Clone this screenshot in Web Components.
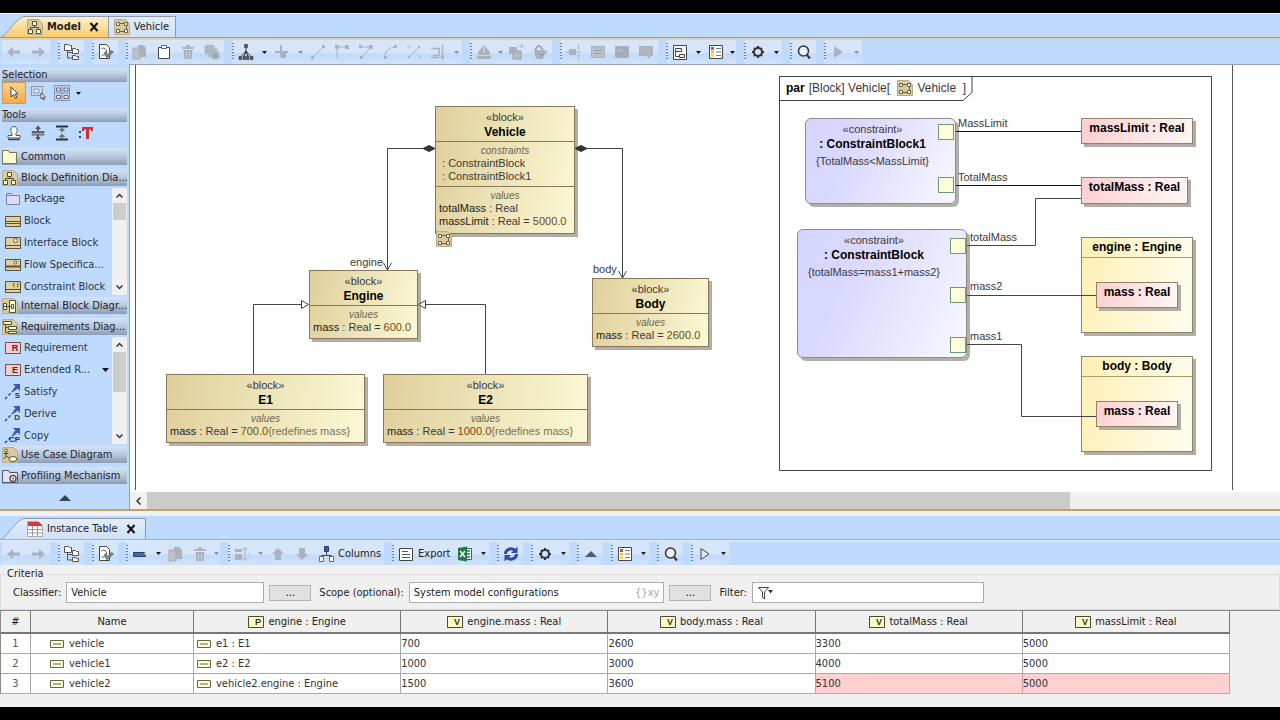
<!DOCTYPE html>
<html lang="en">
<head>
<meta charset="utf-8">
<title>Model - Vehicle</title>
<style>
  body {
    margin: 0;
    background: #000;
    color: #222;
    font: 11px/14px "DejaVu Sans Condensed", Roboto, sans-serif;
  }
</style>
</head>
<body>

<modeler-app></modeler-app>

<script>
(function () {

  // ===== ICONS (16 x 16) =====
  const NOTE = `<path d="M.5.5h11l4 4v11H.5z" fill="#d9cba0" stroke="#b7ab88"/>`;
  const GREY = "#aab3bd";

  const ICONS = {
    bdd: `${NOTE}<g fill="#fffde0" stroke="#55502e"><path d="M5.500 2.500h4v4h-4zM1.500 10.500h4v4h-4zM9.500 10.500h4v4h-4z"/><path d="M7.500 6.500v2M3.500 10.500v-2h8v2" fill="none"/></g>`,
    par: `${NOTE}<g fill="#fffde0" stroke="#6a6440"><path d="M2.500 3.500h3v3h-3zM10.500 3.500h3v3h-3zM2.500 10.500h3v3h-3zM10.500 10.500h3v3h-3z"/><path d="M5.500 4.500h5M5.500 12.500h5M12.500 6.500v4" fill="none"/></g>`,
    ibd: `${NOTE}<g fill="#fffde0" stroke="#55502e"><path d="M7.500 2.500h6v12h-6z"/><path d="M9.500 6.500h2v4h-2z"/><path d="M1.500 5.500h3v6h-3z"/><path d="M4.500 8.500h5M1.500 8.500h3" fill="none"/></g>`,
    reqd: `${NOTE}<g fill="#fffde0" stroke="#55502e"><path d="M1.500 2.500h8v3h-8zM6.500 7.500h8v3h-8zM6.500 12.500h8v2h-8z"/><path d="M3.500 5.500v8h3M3.500 8.500h3" fill="none"/></g>`,
    ucd: `${NOTE}<g fill="#fffde0" stroke="#55502e"><circle cx="4" cy="3.500" r="1.500"/><path d="M4 5v4M1.500 6.500h5M4 9l-2 3M4 9l5 3" fill="none"/><ellipse cx="11" cy="12" rx="4" ry="2.500"/></g>`,
    prof: `<path d="M.5 2.500h6l1 2h8v10H.5z" fill="#e3e3f8" stroke="#55556a"/><circle cx="11" cy="10.500" r="3" fill="#fff" stroke="#555" stroke-width="1.500"/><circle cx="11" cy="10.500" r="1" fill="#555"/>`,
    table: `<path d="M.5.5h11l4 4v11H.5z" fill="#fff" stroke="#aaa"/><path d="M1 1h10.500l3.500 3v1H1z" fill="#d23b3b"/><path d="M1 8.500h14M1 12h14M5.500 5v10M10.500 5v10" stroke="#999" fill="none"/>`,
    folder: `<path d="M.5 1.500h6l1 2h7v11H.5z" fill="#fffbd0" stroke="#77745a"/>`,
    package: `<path d="M1.500 2.500h5l1 2h7v9h-13z" fill="#dcdcf6" stroke="#7e80a0"/><path d="M1.500 4.500h6" stroke="#7e80a0"/>`,
    block: `<path d="M.5 3.500h15v10H.5z" fill="#e0d09e" stroke="#5c5233"/><path d="M1 8.500h14M1 10.500h14" stroke="#5c5233"/>`,
    iface: `<path d="M.5 2.500h15v11H.5z" fill="#e0d09e" stroke="#5c5233"/><circle cx="10.500" cy="5.500" r="2" fill="#fffbe0" stroke="#5c5233"/><path d="M1 10.500h14" stroke="#5c5233"/>`,
    flow: `<path d="M.5 2.500h15v11H.5z" fill="#e0d09e" stroke="#5c5233"/><circle cx="10.500" cy="5.500" r="1.500" fill="#fffbe0" stroke="#5c5233"/><path d="M1 9.500h14" stroke="#5c5233" stroke-width="2"/>`,
    cblock: `<path d="M.5 2.500h15v11H.5z" fill="#e0d09e" stroke="#5c5233"/><path d="M9.500 4q-1 0-1 2 0 2 1 2M12 4q1 0 1 2 0 2-1 2M1 10.500h14" fill="none" stroke="#5c5233"/>`,
    satisfy: arrowIcon("S"),
    derive: arrowIcon("D"),
    copyrel: arrowIcon("CP"),
    req: boxIcon("R", "#fcc9cf", "#7e4a4a"),
    ereq: boxIcon("E", "#fcc9cf", "#7e4a4a"),
    prop: boxIcon("P", "#fffcc4", "#4a4a30"),
    value: boxIcon("V", "#fffcc4", "#4a4a30"),
    inst: `<path d="M1.500 4.500h13v7h-13z" fill="#fffbd6" stroke="#66664a"/><path d="M4 8h8" stroke="#66664a"/>`,
    pointer: `<path d="M5 2v10l2.500-2.500 2 4 1.500-1-2-3.500h3z" fill="#fff" stroke="#444"/>`,
    lasso: `<path d="M1.500 1.500h11v9h-11z" fill="none" stroke="#556" stroke-dasharray="1 1"/><path d="M4 4h5v4H4z" fill="#e6e6e6" stroke="#999"/><path d="M11 8v6l1.500-1.500 1 2.500 1-.5-1-2.500h2z" fill="#fff" stroke="#333" stroke-width=".8"/>`,
    grid: `<path d="M.5.5h15v15H.5zM.5 8h15M8 .5v15" fill="none" stroke="#556" stroke-dasharray="1 1"/><path d="M2.500 3h4v3h-4zM10 3h4v3h-4zM2.500 10.500h4v3h-4zM10 10.500h4v3h-4z" fill="#eef" stroke="#667"/>`,
    stamp: `<path d="M6 8.500C4 6 4.500 1.500 8 1.500S12 6 10 8.500v2h4v2.500H2v-2.500h4z" fill="#fff" stroke="#555"/><path d="M2 14.500h12" stroke="#444" stroke-width="1.500"/>`,
    spread: `<path d="M8 .5L11 4H9v2H7V4H5zM8 15.500L5 12h2v-2h2v2h2z" fill="#555"/><path d="M2 6.500h12v1H2zM2 9h12v1H2z" fill="#eee" stroke="#444" stroke-width=".8"/>`,
    squeeze: `<path d="M2 1.500h12M2 14.500h12" stroke="#333" stroke-width="2"/><path d="M8 7.500L4.500 4H7V2h2v2h2.500zM8 8.500L11.500 12H9v2H7v-2H4.500z" fill="#777"/>`,
    textT: `<path d="M4 2h11v4h-2V4.500h-2V14H8V4.500H6V6H4z" fill="#d22e3a"/><path d="M1 6h2v2H1zM1 11h2v2H1z" fill="#444"/>`,
    back: `<path d="M1 8l6-5v3.500h7v3H7V13z" fill="${GREY}"/>`,
    forward: `<path d="M15 8L9 3v3.500H2v3h7V13z" fill="${GREY}"/>`,
    tree: `<g fill="#fff" stroke="#555"><path d="M.5.500h4l1 1h2v5h-7zM8.500 4.500h3l1 1h2v4h-6zM8.500 11.500h3l1 1h2v3h-6z"/><path d="M3.500 6.500v7.500h5M3.500 8.500h5" fill="none"/></g>`,
    check: `<path d="M1.500.5h7l3 3v11h-10z" fill="#fff" stroke="#444"/><path d="M3.500 5q2-2 4 0t1 4M3.500 11h3" fill="none" stroke="#666"/><path d="M6 9l3 5 6.500-6-2-1.500-4 4-1.500-3z" fill="#7c8792" stroke="#4c5660" stroke-width=".6"/>`,
    copy: `<path d="M6 1h5l3 3v9H6z" fill="${GREY}"/><path d="M1 4h5l2 2v9H1z" fill="#bac1c8" stroke="#a3abb5"/>`,
    paste: `<path d="M2.500 3.500h11v11h-11z" fill="#fff" stroke="#444"/><path d="M5.500 1.500h5v3h-5z" fill="#fff" stroke="#666"/>`,
    trash: `<path d="M2 3h12v2H2zM6 1h4v2H6zM3.500 6h9l-1 9h-7z" fill="${GREY}"/><path d="M6.500 7.500v6M9.500 7.500v6" stroke="#c8d2dc"/>`,
    copydel: `<path d="M1 1h9v9H1zM4 4h9v9H4z" fill="${GREY}" stroke="#bcc6d0"/><path d="M8 8h7v7H8z" fill="#9fa7b0" stroke="#bcc6d0"/>`,
    hier: `<path d="M8 3v4M8 7L3 13M8 7l-2 6M8 7l2 6M8 7l5 6" stroke="#333" fill="none"/><path d="M6.500.5h3v3h-3zM1 12.500h2.500v3H1zM5 12.500h2.500v3H5zM8.500 12.500H11v3H8.500zM12.500 12.500H15v3h-2.500z" fill="#556" stroke="#333" stroke-width=".6"/>`,
    cross: `<path d="M7 1v12M1 8h13" stroke="${GREY}" stroke-width="2"/><path d="M7 7h5v7H7z" fill="${GREY}"/>`,
    line1: `<path d="M3 13L13 3" stroke="${GREY}"/><path d="M1 12h3v3H1zM12 1h3v3h-3z" fill="${GREY}"/>`,
    line2: `<path d="M3 14V3h10" stroke="${GREY}" fill="none"/><path d="M1 1h4v4H1zM11 1h4v4h-4z" fill="${GREY}"/>`,
    line3: `<path d="M3 3h10L4 13" stroke="${GREY}" fill="none"/><path d="M1 1h3v3H1zM11 1h4v4h-4zM2 12h3v3H2z" fill="${GREY}"/>`,
    line4: `<path d="M3 13Q3 4 13 3" stroke="${GREY}" fill="none"/><path d="M2 12h3v3H2zM12 1h3v3h-3z" fill="${GREY}"/>`,
    line5: `<path d="M3 13L13 3M1 3h3M12 13h3" stroke="${GREY}" fill="none"/><path d="M2 12h2v2H2zM12 2h2v2h-2z" fill="${GREY}"/>`,
    line6: `<path d="M1 4.500h8v7H3M1 13.500h8M12.500 1v11" stroke="${GREY}" fill="none" stroke-width="1.500"/><path d="M11 12h3v3h-3z" fill="${GREY}"/>`,
    bucket: `<path d="M2 8l6-7 6 7v3H2zM1 12h14v3H1z" fill="${GREY}"/><path d="M8 2v7" stroke="#d3dfec"/>`,
    layers: `<path d="M1 3h8v7H1z" fill="${GREY}"/><path d="M5 7h8v8H5z" fill="#b3bbc4" stroke="#98a1ab"/><path d="M11 2h5M13.500 0v4" stroke="${GREY}"/>`,
    repair: `<path d="M2 6h11l-2 9H4z" fill="${GREY}"/><path d="M3 6q4-8 8 0M7 9l3 3 5-5" stroke="#98a1ab" fill="none" stroke-width="1.500"/>`,
    route: `<path d="M0 8h15M12.500 1v5M12.500 10v5" stroke="${GREY}"/><path d="M3 5h7v6H3z" fill="${GREY}"/>`,
    panel1: `<path d="M1.500 2.500h13v11h-13z" fill="#b9c0c7" stroke="${GREY}"/><path d="M4 6.500h8M4 9.500h8" stroke="#98a1ab"/>`,
    panel2: `<path d="M1.500 2.500h13v11h-13z" fill="#a7aeb6" stroke="${GREY}"/><path d="M3 8l3-3 3 3" stroke="#c9d2da" fill="none"/>`,
    panel3: `<path d="M1.500 2.500h13v9h-3v3l-3-3h-7z" fill="#aeb5bd" stroke="${GREY}"/>`,
    align: `<path d="M1.500 1.500h13v14h-13z" fill="#fff" stroke="#444"/><path d="M3.500 4.500h6v3h-6zM7.500 10.500h5v3h-5z" fill="#eef" stroke="#444"/><path d="M3.500 7.500v5h4" fill="none" stroke="#444"/>`,
    legend: `<path d="M1.500 1.500h13v13h-13z" fill="#fff" stroke="#445"/><path d="M3 3h3v3H3z" fill="#d9483b"/><path d="M3 7h3v2H3z" fill="#e8b53c"/><path d="M3 10h3v3H3z" fill="#f0dc50"/><path d="M8 4.500h5M8 8h5M8 11.500h5" stroke="#777"/>`,
    gear: `<circle cx="8" cy="8" r="4" fill="none" stroke="#333" stroke-width="2"/><path d="M8 2v2M8 12v2M2 8h2M12 8h2M4 4l1 1M11 11l1 1M12 4l-1 1M5 11l-1 1" stroke="#333" stroke-width="2"/>`,
    search: `<circle cx="7.500" cy="7" r="5" fill="#eaf3fd" stroke="#333" stroke-width="1.500"/><path d="M11 11l3 3.500" stroke="#333" stroke-width="2"/>`,
    playoff: `<path d="M4 2l9 6-9 6z" fill="${GREY}"/>`,
    play: `<path d="M4 2.500l8 5.500-8 5.500z" fill="#dfeafa" stroke="#445"/>`,
    add: `<path d="M1.500 6.500h12v4h-12z" fill="#4a68b4" stroke="#26406f"/><path d="M13 4l1 1.500 2-.5-1 2 1 1.500-2-.5-1 1.500-.5-2z" fill="#f5e07a"/>`,
    move: `<path d="M1 3h7v3H1zM1 8h7v6H1z" fill="${GREY}"/><path d="M11 14V2M9 4l2-2.500L13 4M9 12l2 2.500 2-2.500M14 8h2" stroke="${GREY}" fill="none"/>`,
    up: `<path d="M8 2l6 6h-3v6H5V8H2z" fill="${GREY}"/>`,
    down: `<path d="M8 14l6-6h-3V2H5v6H2z" fill="${GREY}"/>`,
    columns: `<path d="M6.500.5h4v5h-4z" fill="#3c5aa8" stroke="#24386e"/><path d="M8.500 5.500v4M3.500 11V9.500h10V11" stroke="#444" fill="none"/><path d="M1.500 10.500h4v5h-4zM11.500 10.500h4v5h-4z" fill="#fff" stroke="#667"/>`,
    export: `<path d="M1.500 2.500h13v12h-13z" fill="#fff" stroke="#444"/><path d="M4 5.500h6M4 8.500h8M4 11.500h8" stroke="#555"/>`,
    excel: `<path d="M8 2.500h6.500v11H8z" fill="#fff" stroke="#1f7a45"/><path d="M10 5h3M10 8h3M10 11h3" stroke="#1f7a45" stroke-width="1.500"/><path d="M1 2l9-1.500v15L1 14z" fill="#1f7a45"/><path d="M3 5l5 6M8 5l-5 6" stroke="#fff" stroke-width="1.500"/>`,
    refresh: `<path d="M2.500 8a5.500 5 0 0 1 9-4M13.500 8a5.500 5 0 0 1-9 4" fill="none" stroke="#3446a8" stroke-width="3"/><path d="M14.500.5V7H8zM1.500 15.500V9H8z" fill="#3446a8"/>`,
    collapse: `<path d="M2 11l6-6 6 6z" fill="#555b66"/>`,
    filter: `<path d="M1.500 2.500h10l-4 4.500v7l-2-1.500V7z" fill="#fff" stroke="#444"/><path d="M11 5h5l-2.500 3.500z" fill="#333"/>`
  };

  function arrowIcon(letter) {
    return `<path d="M0 15L9 6" stroke="#32508e" stroke-width="1.500" stroke-dasharray="3 2"/><path d="M8 0h7v7l-2.500-2.500L10 7 8 5l2.500-2.500z" fill="#3b5cae"/><text x="15" y="14" text-anchor="end" font-family="Liberation Sans" font-weight="bold" font-size="8" fill="#333">${letter}</text>`;
  }

  function boxIcon(letter, fill, stroke) {
    return `<path d="M.5 2.500h15v11H.5z" fill="${fill}" stroke="${stroke}"/><text x="10" y="11" text-anchor="middle" font-family="Liberation Sans" font-weight="bold" font-size="9" fill="#333">${letter}</text>`;
  }

  // Small base: every element renders its html() into an open shadow root
  class Base extends HTMLElement {
    constructor() {
      super();
      this._root = this.attachShadow({ mode: "open" });
    }
    connectedCallback() {
      this._root.innerHTML = this.html();
    }
    attr(name, def) {
      return this.getAttribute(name) || def || "";
    }
  }

  class UiIcon extends Base {
    html() {
      return `
        <style>
          :host { display: inline-block; width: 16px; height: 16px; flex: none; }
          svg { display: block; width: 100%; height: 100%; overflow: visible; }
        </style>
        <svg viewBox="0 0 16 16" aria-hidden="true">${ICONS[this.attr("name")] || ""}</svg>
      `;
    }
  }

  // ===== TABS =====
  class TabBar extends Base {
    html() {
      return `
        <style>
          :host {
            display: flex;
            align-items: flex-end;
            height: 23px;
            background: #bfdaff;
            border-top: 1px solid #e8f1fd;
            border-bottom: 1px solid var(--edge, #a89a80);
          }
        </style>
        <slot></slot>
      `;
    }
  }

  class TabItem extends Base {
    html() {
      const slope = this.hasAttribute("slope");
      const close = this.hasAttribute("closable");
      return `
        <style>
          :host { display: flex; height: 21px; --top: #e2edfc; --low: #cfe1f9; }
          :host([active]) { --top: #fdf0cf; --low: #f9cb6a; font-weight: bold; }
          svg { width: 24px; height: 21px; flex: none; }
          .body {
            display: flex;
            align-items: center;
            background: linear-gradient(var(--top), var(--low));
            border-top: 1px solid #8e9aac;
            border-right: 1px solid #8e9aac;
            padding-right: 6px;
          }
          button {
            display: flex;
            align-items: center;
            gap: 4px;
            border: 0;
            padding: 0 0 0 5px;
            background: none;
            font: inherit;
            color: #222;
          }
          .slope { padding-right: 9px; }
          .slope button { padding-left: 3px; }
          .slope .close { padding-left: 8px; }
          .close svg { width: 10px; height: 10px; }
        </style>
        ${slope ? `<svg viewBox="0 0 24 21">
          <defs><linearGradient id="g" x2="0" y2="1">
            <stop offset="0" stop-color="var(--top)"/><stop offset="1" stop-color="var(--low)"/>
          </linearGradient></defs>
          <path d="M1 21C6 20 17 1 24 0V21z" fill="url(#g)"/>
          <path d="M1 21C6 20 17 1 24 .5" fill="none" stroke="#8e9aac"/>
        </svg>` : ""}
        <div class="body ${slope ? "slope" : ""}">
          <button type="button"><ui-icon name="${this.attr("icon")}"></ui-icon><slot></slot></button>
          ${close ? `<button type="button" class="close" aria-label="Close"><svg viewBox="0 0 10 10"><path d="M1.500 1l7 8M8.500 1l-7 8" stroke="#111" stroke-width="2"/></svg></button>` : ""}
        </div>
      `;
    }
  }

  // ===== TOOLBAR =====
  class ToolBar extends Base {
    html() {
      return `
        <style>
          :host {
            display: flex;
            height: 24px;
            padding-left: 2px;
            gap: 8px;
            background: #bfdaff;
            border-top: 2px solid var(--rule, #e4d3a8);
          }
        </style>
        <slot></slot>
      `;
    }
  }

  class ToolGroup extends Base {
    html() {
      return `
        <style>
          :host {
            display: flex;
            align-items: stretch;
            background: linear-gradient(#d6e5fa 0 50%, #c3daf8 60%, #cfe2fb);
          }
          .grip {
            width: 2px;
            margin: 3px 0;
            background: repeating-linear-gradient(#5f7fb0 0 1px, transparent 1px 3px);
          }
        </style>
        ${this.hasAttribute("bare") ? "" : `<div class="grip"></div>`}
        <slot></slot>
      `;
    }
  }

  class ToolButton extends Base {
    html() {
      const label = this.attr("label");
      const color = this.hasAttribute("dim") ? "#8592a3" : "#111";
      return `
        <style>
          :host { display: flex; }
          button {
            display: flex;
            align-items: center;
            justify-content: center;
            min-width: 24px;
            padding: 0;
            border: 0;
            background: none;
            color: #222;
            font: inherit;
          }
          button.text { gap: 4px; padding: 0 3px 0 4px; }
          button.drop { min-width: 12px; }
          :host([tight]) button.drop { min-width: 8px; }
          .drop svg { width: 5px; height: 3px; }
        </style>
        <button type="button" class="${label ? "text" : ""}" aria-label="${label || this.attr("icon")}"><ui-icon name="${this.attr("icon")}"></ui-icon>${label}</button>
        ${this.hasAttribute("drop") ? `<button type="button" class="drop" aria-label="More"><svg viewBox="0 0 5 3"><path d="M0 0h5L2.500 3z" fill="${color}"/></svg></button>` : ""}
      `;
    }
  }

  // Item syntax: icon, icon=Label, then ">" drop-down, "~" tight drop-down, "!" dimmed
  function group(items, bare) {
    return `<tool-group ${bare ? "bare" : ""}>` + items.split(" ").filter(Boolean).map(item => {
      const m = item.match(/^(\w+)(?:=(\w+))?([>~!]*)$/);
      return `<tool-button icon="${m[1]}" ${m[2] ? `label="${m[2]}"` : ""}
        ${/[>~]/.test(m[3]) ? "drop" : ""} ${m[3].includes("~") ? "tight" : ""} ${m[3].includes("!") ? "dim" : ""}></tool-button>`;
    }).join("") + `</tool-group>`;
  }

  // ===== SIDE PALETTE =====
  class PaletteHead extends Base {
    html() {
      const icon = this.attr("icon");
      return `
        <style>
          :host { display: block; }
          button {
            display: flex;
            align-items: center;
            gap: 3px;
            width: 100%;
            height: 17px;
            padding: 0;
            border: 0;
            background: linear-gradient(#d5e4f8, #b8c8df 50%, #8e9cb3);
            color: #1c2430;
            font: inherit;
            white-space: nowrap;
          }
          :host([plain]) button { height: 14px; }
        </style>
        <button type="button">${icon ? `<ui-icon name="${icon}"></ui-icon>` : ""}<slot></slot></button>
      `;
    }
  }

  class PaletteItem extends Base {
    html() {
      return `
        <style>
          :host { display: block; }
          button {
            display: flex;
            align-items: center;
            gap: 3px;
            width: 100%;
            height: 22px;
            padding: 0 3px;
            border: 0;
            background: none;
            color: #2c3440;
            font: inherit;
            white-space: nowrap;
          }
          .drop { width: 7px; height: 4px; margin-left: auto; }
        </style>
        <button type="button">
          <ui-icon name="${this.attr("icon")}"></ui-icon><slot></slot>
          ${this.hasAttribute("drop") ? `<svg class="drop" viewBox="0 0 7 4"><path d="M0 0h7L3.500 4z" fill="#111"/></svg>` : ""}
        </button>
      `;
    }
  }

  class PaletteList extends Base {
    html() {
      return `
        <style>
          :host { display: flex; height: 107px; overflow: hidden; }
          .items { flex: 1; min-width: 0; }
          .bar {
            display: flex;
            flex-direction: column;
            align-items: center;
            width: 15px;
            background: #f0f0f0;
          }
          .thumb { width: 13px; height: ${this.attr("thumb")}px; background: #cdcdcd; }
          svg { width: 7px; height: 5px; padding: 5px 0; }
          svg:last-child { margin-top: auto; }
        </style>
        <div class="items"><slot></slot></div>
        <div class="bar">
          <svg viewBox="0 0 7 5"><path d="M.5 4.500l3-3 3 3" fill="none" stroke="#333" stroke-width="1.500"/></svg>
          <div class="thumb"></div>
          <svg viewBox="0 0 7 5"><path d="M.5.5l3 3 3-3" fill="none" stroke="#333" stroke-width="1.500"/></svg>
        </div>
      `;
    }
  }

  class SidePalette extends Base {
    html() {
      return `
        <style>
          :host {
            display: flex;
            flex-direction: column;
            width: 125px;
            padding: 4px 2px 0;
            background: #bfdaff;
          }
          .row { display: flex; height: 26px; align-items: flex-start; }
          .stack { display: flex; flex-direction: column; gap: 4px; }
          .tool {
            display: flex;
            align-items: center;
            justify-content: center;
            box-sizing: border-box;
            width: 24px;
            height: 22px;
            padding: 0;
            border: 0;
            background: none;
          }
          .tool.on { background: linear-gradient(#fbd08c, #f7ad42); border: 1px solid #c99a54; }
          .gap { margin-top: 2px; }
          .caret { width: 5px; height: 3px; margin: 10px 0 0 2px; }
          .more { align-self: center; border: 0; padding: 10px 10px 5px; background: none; }
          .more svg { display: block; width: 12px; height: 7px; }
        </style>
        <palette-head plain>Selection</palette-head>
        <div class="row">
          <button type="button" class="tool on" aria-label="Select"><ui-icon name="pointer"></ui-icon></button>
          <button type="button" class="tool" aria-label="Lasso"><ui-icon name="lasso"></ui-icon></button>
          <button type="button" class="tool" aria-label="Group select"><ui-icon name="grid"></ui-icon></button>
          <svg class="caret" viewBox="0 0 5 3"><path d="M0 0h5L2.500 3z" fill="#111"/></svg>
        </div>
        <palette-head plain>Tools</palette-head>
        <div class="row">
          <button type="button" class="tool" aria-label="Stamp"><ui-icon name="stamp"></ui-icon></button>
          <button type="button" class="tool" aria-label="Spread"><ui-icon name="spread"></ui-icon></button>
          <button type="button" class="tool" aria-label="Squeeze"><ui-icon name="squeeze"></ui-icon></button>
          <button type="button" class="tool" aria-label="Text"><ui-icon name="textT"></ui-icon></button>
        </div>
        <div class="stack">
          <palette-head icon="folder">Common</palette-head>
          <palette-head icon="bdd">Block Definition Dia...</palette-head>
        </div>
        <palette-list class="gap" thumb="17">
          <palette-item icon="package">Package</palette-item>
          <palette-item icon="block">Block</palette-item>
          <palette-item icon="iface">Interface Block</palette-item>
          <palette-item icon="flow">Flow Specifica...</palette-item>
          <palette-item icon="cblock">Constraint Block</palette-item>
        </palette-list>
        <div class="stack gap">
          <palette-head icon="ibd">Internal Block Diagr...</palette-head>
          <palette-head icon="reqd">Requirements Diag...</palette-head>
        </div>
        <palette-list class="gap" thumb="40">
          <palette-item icon="req">Requirement</palette-item>
          <palette-item icon="ereq" drop>Extended R...</palette-item>
          <palette-item icon="satisfy">Satisfy</palette-item>
          <palette-item icon="derive">Derive</palette-item>
          <palette-item icon="copyrel">Copy</palette-item>
        </palette-list>
        <div class="stack gap">
          <palette-head icon="ucd">Use Case Diagram</palette-head>
          <palette-head icon="prof">Profiling Mechanism</palette-head>
        </div>
        <button type="button" class="more" aria-label="Scroll up"><svg viewBox="0 0 12 7"><path d="M0 7l6-6 6 6z" fill="#3a4152"/></svg></button>
      `;
    }
  }

  // ===== DIAGRAM NODES =====
  // Anything on the sheet is placed by x / y and sized by w / h
  class SheetNode extends Base {
    connectedCallback() {
      if (this.hasAttribute("x")) {
        this.style.position = "absolute";
        this.style.left = this.attr("x") + "px";
        this.style.top = this.attr("y") + "px";
      }
      if (this.hasAttribute("w")) this.style.width = this.attr("w") + "px";
      if (this.hasAttribute("h")) this.style.height = this.attr("h") + "px";
      super.connectedCallback();
    }
  }

  class BlockNode extends SheetNode {
    html() {
      return `
        <style>
          :host {
            display: block;
            box-sizing: border-box;
            border: 1px solid #8a765a;
            background: linear-gradient(100deg, #e0cf9b, #fbf9d6);
            box-shadow: 3px 3px 0 #b3ada6;
            text-align: center;
          }
          .head { padding: 3px 0 1px; }
          .name { font-size: 12px; line-height: 16px; font-weight: bold; color: #000; }
        </style>
        <div class="head">
          <div>«block»</div>
          <div class="name">${this.attr("name")}</div>
        </div>
        <slot></slot>
      `;
    }
  }

  class BlockPart extends Base {
    html() {
      return `
        <style>
          :host {
            display: block;
            padding: 3px 3px 3px;
            border-top: 1px solid #8a765a;
            line-height: 13px;
            text-align: left;
            white-space: nowrap;
          }
          .kind { font-size: 10px; line-height: 12px; font-style: italic; text-align: center; color: #6b6553; }
        </style>
        <div class="kind">${this.attr("kind")}</div>
        <slot></slot>
      `;
    }
  }

  class ConstraintNode extends SheetNode {
    html() {
      return `
        <style>
          :host {
            display: block;
            box-sizing: border-box;
            padding: 3px 16px 0 0;
            border: 1px solid #8d8d86;
            border-radius: 6px;
            background: linear-gradient(115deg, #d6d5ff, #d9d8ff 30%, #f8f8ff);
            box-shadow: 3px 3px 0 #b1b1ac;
            text-align: center;
            white-space: nowrap;
          }
          .name { font-size: 12px; line-height: 16px; font-weight: bold; color: #000; }
          .expr { margin-top: 2px; }
        </style>
        <div>«constraint»</div>
        <div class="name">: ${this.attr("name")}</div>
        <div class="expr"><slot></slot></div>
      `;
    }
  }

  class PortNode extends SheetNode {
    html() {
      return `
        <style>
          :host {
            display: block;
            box-sizing: border-box;
            width: 16px;
            height: 16px;
            border: 1px solid #6f9a72;
            background: #fdffd9;
          }
        </style>
      `;
    }
  }

  class PropertyNode extends SheetNode {
    html() {
      return `
        <style>
          :host {
            display: block;
            box-sizing: border-box;
            border: 1px solid #8f8468;
            background: linear-gradient(100deg, #ffcfd0, #fff6f6);
            box-shadow: 3px 3px 0 #b3ada6;
            text-align: center;
            font-size: 12px;
            font-weight: bold;
            color: #000;
          }
          .name { line-height: 19px; white-space: nowrap; }
          :host([outer]) { background: linear-gradient(100deg, #fff0b4, #fffdf0); }
          :host([outer]) .name { border-bottom: 1px solid #a89c70; }
          :host([outer]) .in { display: flex; justify-content: center; padding-top: 24px; }
        </style>
        <div class="name">${this.attr("name")}</div>
        <div class="in"><slot></slot></div>
      `;
    }
  }

  class SheetLabel extends SheetNode {
    html() {
      return `<style>:host { display: flex; align-items: center; white-space: nowrap; }</style><slot></slot>`;
    }
  }

  class DiagramSheet extends Base {
    html() {
      return `
        <style>
          :host {
            display: block;
            position: relative;
            box-sizing: border-box;
            width: 1098px;
            height: 425px;
            border: solid #555;
            border-width: 0 1px;
            font-family: "Liberation Sans", Arial, sans-serif;
            color: #3a3a3a;
          }
          svg { position: absolute; left: 0; top: 0; width: 1096px; height: 425px; pointer-events: none; }
          .v { color: #6e4c12; }
          .r { color: #777257; }
          .m { color: #1c1c1c; }
          b { font-size: 12px; color: #000; }
          .frame { gap: 4px; font-size: 12px; }
        </style>

        <block-node name="Vehicle" x="299" y="41" w="140" h="128">
          <block-part kind="constraints">
            <div>&nbsp;: ConstraintBlock</div>
            <div>&nbsp;: ConstraintBlock1</div>
          </block-part>
          <block-part kind="values">
            <div><span class="m">totalMass</span> : Real</div>
            <div><span class="m">massLimit</span> : Real = <span class="v">5000.0</span></div>
          </block-part>
        </block-node>
        <ui-icon name="par" style="position: absolute; left: 300px; top: 166px"></ui-icon>

        <block-node name="Engine" x="173" y="205" w="109" h="69">
          <block-part kind="values"><span class="m">mass</span> : Real = <span class="v">600.0</span></block-part>
        </block-node>
        <block-node name="Body" x="456" y="213" w="117" h="69">
          <block-part kind="values"><span class="m">mass</span> : Real = <span class="v">2600.0</span></block-part>
        </block-node>
        <block-node name="E1" x="30" y="309" w="199" h="69">
          <block-part kind="values"><span class="m">mass</span> : Real = <span class="v">700.0</span><span class="r">{redefines mass}</span></block-part>
        </block-node>
        <block-node name="E2" x="247" y="309" w="205" h="69">
          <block-part kind="values"><span class="m">mass</span> : Real = <span class="v">1000.0</span><span class="r">{redefines mass}</span></block-part>
        </block-node>

        <constraint-node name="ConstraintBlock1" x="669" y="53" w="151" h="86">{TotalMass&lt;MassLimit}</constraint-node>
        <constraint-node name="ConstraintBlock" x="661" y="164" w="170" h="129">{totalMass=mass1+mass2}</constraint-node>
        <port-node x="802" y="59"></port-node>
        <port-node x="802" y="112"></port-node>
        <port-node x="814" y="173"></port-node>
        <port-node x="814" y="222"></port-node>
        <port-node x="814" y="272"></port-node>

        <property-node name="massLimit : Real" x="945" y="53" w="112" h="26"></property-node>
        <property-node name="totalMass : Real" x="945" y="112" w="107" h="27"></property-node>
        <property-node outer name="engine : Engine" x="945" y="172" w="112" h="96">
          <property-node name="mass : Real" w="82" h="26"></property-node>
        </property-node>
        <property-node outer name="body : Body" x="945" y="291" w="112" h="96">
          <property-node name="mass : Real" w="82" h="26"></property-node>
        </property-node>

        <svg viewBox="0 0 1096 425">
          <g fill="none" stroke="#444">
            <path d="M288 83.500H251.500V204M247.500 198l4 7 4-7"/>
            <path d="M450 83.500H486.500V212M482.500 206l4 7 4-7"/>
            <path d="M117.500 309V239.500H165M349.500 309V239.500H290"/>
            <path d="M643.500 11.500H1075.500V405.500H643.500zM643.500 35.500H827l9-8V11.500"/>
            <path d="M820 66.500H945M820 120.500H945" stroke="#111"/>
            <path d="M831 180.500H899.500V133.500H945M831 230.500H960M831 279.500H885.500V351.500H960"/>
          </g>
          <path d="M287 83.500l6-3 6 3-6 3zM439 83.500l6-3 6 3-6 3z" fill="#333" stroke="#333"/>
          <path d="M165.500 235.500v8l7-4zM289.500 235.500v8l-7-4z" fill="#fff" stroke="#444"/>
        </svg>

        <sheet-label x="214" y="190">engine</sheet-label>
        <sheet-label x="457" y="197">body</sheet-label>
        <sheet-label x="822" y="51">MassLimit</sheet-label>
        <sheet-label x="822" y="105">TotalMass</sheet-label>
        <sheet-label x="834" y="165">totalMass</sheet-label>
        <sheet-label x="834" y="214">mass2</sheet-label>
        <sheet-label x="834" y="264">mass1</sheet-label>
        <sheet-label class="frame" x="650" y="15">
          <b>par</b> <span>[Block] Vehicle[&nbsp;</span> <ui-icon name="par"></ui-icon> <span>Vehicle&nbsp; ]</span>
        </sheet-label>
      `;
    }
  }

  class DiagramPane extends Base {
    html() {
      return `
        <style>
          :host {
            display: flex;
            flex-direction: column;
            min-width: 0;
            background: #fff;
            border-left: 1px solid #98a0ab;
            border-top: 1px solid #98a0ab;
          }
          .view { flex: 1; padding-left: 5px; overflow: hidden; }
          .scroll { display: flex; height: 17px; align-items: center; background: #f0f0f0; }
          svg { width: 5px; height: 8px; padding: 0 6px; }
          .thumb { flex: 923; height: 100%; background: #cbcbcb; }
          .track { flex: 210; }
        </style>
        <div class="view"><diagram-sheet></diagram-sheet></div>
        <div class="scroll">
          <svg viewBox="0 0 5 8"><path d="M4.500.5L1 4l3.500 3.500" fill="none" stroke="#333" stroke-width="1.500"/></svg>
          <div class="thumb"></div>
          <div class="track"></div>
        </div>
      `;
    }
  }

  // ===== CRITERIA FORM =====
  class CriteriaForm extends Base {
    html() {
      return `
        <style>
          :host { display: block; }
          fieldset {
            display: flex;
            align-items: center;
            margin: 0;
            padding: 1px 0 6px 12px;
            border: 1px solid #dcdcdc;
            min-width: 0;
          }
          legend { margin-left: -8px; padding: 0 2px; }
          label { margin-right: 5px; white-space: nowrap; }
          .box {
            display: flex;
            align-items: center;
            box-sizing: border-box;
            height: 21px;
            min-width: 0;
            padding: 0 4px;
            border: 1px solid #acb0b6;
            background: #fff;
            color: #aaa;
          }
          input {
            flex: 1;
            min-width: 0;
            padding: 0;
            border: 0;
            outline: 0;
            background: none;
            font: inherit;
            color: #222;
          }
          .a { flex: 196 1 0; }
          .b { flex: 256 1 0; }
          .c { flex: 231 1 0; }
          .rest { flex: 308 1 0; }
          button {
            width: 42px;
            height: 16px;
            margin: 0 8px 0 5px;
            padding: 0;
            border: 1px solid #b4b4b4;
            background: #e1e1e1;
            font: inherit;
            line-height: 14px;
          }
        </style>
        <fieldset>
          <legend>Criteria</legend>
          <label for="cls">Classifier:</label>
          <div class="box a"><input id="cls" value="Vehicle"></div>
          <button type="button" aria-label="Choose classifier">...</button>
          <label for="scope">Scope (optional):</label>
          <div class="box b"><input id="scope" value="System model configurations">{}xy</div>
          <button type="button" aria-label="Choose scope">...</button>
          <label for="filter">Filter:</label>
          <div class="box c"><ui-icon name="filter"></ui-icon><input id="filter"></div>
          <div class="rest"></div>
        </fieldset>
      `;
    }
  }

  // ===== INSTANCE TABLE =====
  const COLS = [
    ["prop", "engine : Engine"],
    ["value", "engine.mass : Real"],
    ["value", "body.mass : Real"],
    ["value", "totalMass : Real"],
    ["value", "massLimit : Real"]
  ];
  const ROWS = [
    ["vehicle", "e1 : E1", 700, 2600, 3300, 5000],
    ["vehicle1", "e2 : E2", 1000, 3000, 4000, 5000],
    ["vehicle2", "vehicle2.engine : Engine", 1500, 3600, 5100, 5000]
  ];

  class InstanceTable extends Base {
    html() {
      return `
        <style>
          :host { display: block; border-top: 1px solid #8a8a8a; border-left: 1px solid #8a8a8a; }
          table { width: calc(100% - 50px); table-layout: fixed; border-collapse: separate; border-spacing: 0; }
          th, td { box-sizing: border-box; padding: 0; border-right: 1px solid #a9a9a9; white-space: nowrap; }
          th {
            height: 23px;
            font-weight: normal;
            border-right-color: #777;
            border-bottom: 2px solid #777;
            background: #f0f0f0;
          }
          td { height: 20px; border-bottom: 1px solid #a9a9a9; background: #fff; color: #333; }
          .cell { display: flex; align-items: center; gap: 4px; }
          th .cell { justify-content: center; }
          .num { width: 30px; text-align: center; }
          td.num { color: #555; }
          .name { width: 163px; }
          td.name { padding-left: 18px; }
          td.ref { padding-left: 2px; }
          .bad { background: #ffd0d0; border-color: #c6a4a4; }
        </style>
        <table>
          <thead>
            <tr>
              <th class="num">#</th>
              <th class="name">Name</th>
              ${COLS.map(c => `<th><div class="cell"><ui-icon name="${c[0]}"></ui-icon>${c[1]}</div></th>`).join("")}
            </tr>
          </thead>
          <tbody>
            ${ROWS.map((r, i) => `
              <tr>
                <td class="num">${i + 1}</td>
                <td class="name"><div class="cell"><ui-icon name="inst"></ui-icon>${r[0]}</div></td>
                <td class="ref"><div class="cell"><ui-icon name="inst"></ui-icon>${r[1]}</div></td>
                ${r.slice(2).map((v, c) => `<td class="${c > 1 && r[4] > r[5] ? "bad" : ""}">${v}</td>`).join("")}
              </tr>`).join("")}
          </tbody>
        </table>
      `;
    }
  }

  // ===== APP =====
  class ModelerApp extends Base {
    html() {
      return `
        <style>
          :host {
            display: flex;
            flex-direction: column;
            box-sizing: border-box;
            min-height: 100vh;
            border: solid #000;
            border-width: 13px 0;
            background: #f0f0f0;
          }
          .work { display: flex; flex: 1; background: #bfdaff; }
          diagram-pane { flex: 1; }
          .split { height: 4px; border-top: 2px solid #c3a163; background: #f0f0f0; }
          .lower { --edge: #9fb1c9; --rule: #dbe8fb; }
          tool-bar.lower { margin-bottom: 2px; height: 23px; }
          instance-table { margin-bottom: 13px; }
        </style>

        <tab-bar>
          <tab-item slope active closable icon="bdd">Model</tab-item>
          <tab-item icon="par">Vehicle</tab-item>
        </tab-bar>
        <tool-bar>
          ${group("back forward", true)}
          ${group("tree")}
          ${group("check")}
          ${group("copy paste trash copydel")}
          ${group("hier> cross>! line1 line2 line3 line4 line5 line6>!")}
          ${group("bucket~! layers repair")}
          ${group("route panel1 panel2 panel3")}
          ${group("align> legend~")}
          ${group("gear>")}
          ${group("search")}
          ${group("playoff>!")}
        </tool-bar>

        <div class="work">
          <side-palette></side-palette>
          <diagram-pane></diagram-pane>
        </div>
        <div class="split"></div>

        <tab-bar class="lower">
          <tab-item slope closable icon="table">Instance Table</tab-item>
        </tab-bar>
        <tool-bar class="lower">
          ${group("back forward", true)}
          ${group("tree")}
          ${group("check")}
          ${group("add> copy trash~!")}
          ${group("move>! up down columns=Columns")}
          ${group("export=Export excel>")}
          ${group("refresh")}
          ${group("gear>")}
          ${group("collapse")}
          ${group("legend>")}
          ${group("search")}
          ${group("play>")}
        </tool-bar>
        <criteria-form></criteria-form>
        <instance-table></instance-table>
      `;
    }
  }

  customElements.define("ui-icon", UiIcon);
  customElements.define("tab-bar", TabBar);
  customElements.define("tab-item", TabItem);
  customElements.define("tool-bar", ToolBar);
  customElements.define("tool-group", ToolGroup);
  customElements.define("tool-button", ToolButton);
  customElements.define("palette-head", PaletteHead);
  customElements.define("palette-item", PaletteItem);
  customElements.define("palette-list", PaletteList);
  customElements.define("side-palette", SidePalette);
  customElements.define("block-node", BlockNode);
  customElements.define("block-part", BlockPart);
  customElements.define("constraint-node", ConstraintNode);
  customElements.define("port-node", PortNode);
  customElements.define("property-node", PropertyNode);
  customElements.define("sheet-label", SheetLabel);
  customElements.define("diagram-sheet", DiagramSheet);
  customElements.define("diagram-pane", DiagramPane);
  customElements.define("criteria-form", CriteriaForm);
  customElements.define("instance-table", InstanceTable);
  customElements.define("modeler-app", ModelerApp);

})();
</script>
</body>
</html>
